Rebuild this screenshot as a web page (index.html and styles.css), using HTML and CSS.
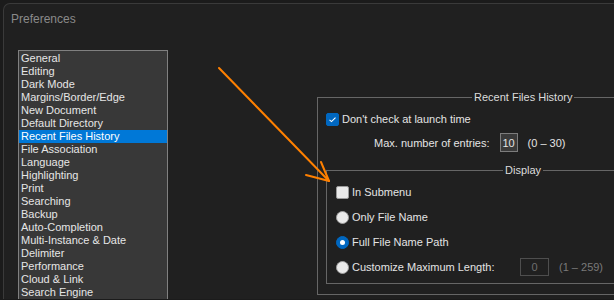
FILE: index.html
```html
<!DOCTYPE html>
<html lang="en">
<head>
  <meta charset="UTF-8" />
  <title>Preferences</title>
  <link rel="stylesheet" href="styles.css">
</head>
<body>
  <div class="window">
    <div class="title">Preferences</div>
    <div class="content">
      <!-- category list -->
      <div class="list">
        <div class="item">General</div>
        <div class="item">Editing</div>
        <div class="item">Dark Mode</div>
        <div class="item">Margins/Border/Edge</div>
        <div class="item">New Document</div>
        <div class="item">Default Directory</div>
        <div class="item selected">Recent Files History</div>
        <div class="item">File Association</div>
        <div class="item">Language</div>
        <div class="item">Highlighting</div>
        <div class="item">Print</div>
        <div class="item">Searching</div>
        <div class="item">Backup</div>
        <div class="item">Auto-Completion</div>
        <div class="item">Multi-Instance &amp; Date</div>
        <div class="item">Delimiter</div>
        <div class="item">Performance</div>
        <div class="item">Cloud &amp; Link</div>
        <div class="item">Search Engine</div>
      </div>

      <!-- settings panel -->
      <fieldset class="group outer">
        <legend class="legend-recent">Recent Files History</legend>
        <div class="row first">
          <span class="check checked"><svg width="13" height="13" viewBox="0 0 13 13"><path d="M3.5 6.8 L5.5 8.6 L9.5 4.6" fill="none" stroke="#fff" stroke-width="1.1"/></svg></span>
          <span>Don't check at launch time</span>
        </div>
        <div class="row entries">
          <span>Max. number of entries:</span>
          <span class="num">10</span>
          <span class="range">(0 – 30)</span>
        </div>

        <fieldset class="group inner">
          <legend class="legend-display">Display</legend>
          <div class="opt first">
            <span class="check"></span>
            <span>In Submenu</span>
          </div>
          <div class="opt">
            <span class="radio"></span>
            <span>Only File Name</span>
          </div>
          <div class="opt">
            <span class="radio on"></span>
            <span>Full File Name Path</span>
          </div>
          <div class="opt">
            <span class="radio"></span>
            <span class="wide">Customize Maximum Length:</span>
            <span class="num disabled">0</span>
            <span class="range dim">(1 – 259)</span>
          </div>
        </fieldset>
      </fieldset>
    </div>
  </div>

  <!-- annotation arrow -->
  <svg class="arrow" width="614" height="300" viewBox="0 0 614 300">
    <g fill="none" stroke="#ff8000" stroke-width="2" stroke-linecap="round">
      <path d="M219 68 L329 181"/>
      <path d="M329 181 L306 175"/>
      <path d="M329 181 L321 162"/>
    </g>
  </svg>
</body>
</html>
```

FILE: styles.css
```css
html, body { margin: 0; height: 100%; }
body { background: #1b1b1b; font-family: "Liberation Sans", Arial, sans-serif; font-size: 11px; color: #e4e4e4; overflow: hidden; position: relative; }
.window { margin: 3px 0 0 3px; height: 296px; box-sizing: border-box; overflow: hidden; background: #202020; border: 1px solid #3a3a3a; border-right: none; border-bottom: none; border-radius: 7px 0 0 0; }
.title { height: 46px; box-sizing: border-box; padding: 7px 0 0 7px; line-height: 16px; font-size: 12px; color: #8a8a8a; }
.content { display: flex; align-items: flex-start; }

.list { flex: none; margin-left: 14px; width: 148px; height: 260px; background: #383838; border: 1px solid #808080; padding-top: 1px; }
.item { line-height: 13px; height: 13px; padding-left: 2px; color: #e6e6e6; white-space: nowrap; }
.item.selected { background: #0078d7; color: #fff; }

.group { margin: 0; border: 1px solid #666; min-width: 0; }
.group legend { padding: 0 2px; line-height: 14px; font-size: 11px; color: #dcdcdc; }
.outer { flex: none; margin: 40px 0 0 149px; width: 330px; padding: 0 0 10px 8px; }
.legend-recent { margin-left: 146px; }
.inner { margin-top: 11px; width: 330px; padding: 0 0 8px 9px; }
.legend-display { margin-left: 167px; }

.row { display: flex; align-items: center; height: 16px; }
.row.first { margin-top: 7px; }
.row.entries { margin: 6px 0 0 48px; height: 19px; }

.opt { display: flex; align-items: center; height: 16px; margin-top: 9px; }
.opt.first { margin-top: 7px; }

.check { width: 13px; height: 13px; box-sizing: border-box; border-radius: 2px; background: #e9e9e9; border: 1px solid #9a9a9a; margin-right: 3px; flex: none; }
.check.checked { background: #0067c0; border-color: #0067c0; }
.check svg { display: block; margin: -1px; }
.radio { width: 13px; height: 13px; box-sizing: border-box; border-radius: 50%; background: #e9e9e9; border: 1px solid #a0a0a0; margin-right: 3px; flex: none; position: relative; }
.radio.on { background: #0067c0; border-color: #0067c0; }
.radio.on::after { content: ""; position: absolute; left: 3px; top: 3px; width: 5px; height: 5px; border-radius: 50%; background: #fff; }

.num { width: 18px; height: 19px; box-sizing: border-box; border: 1px solid #7c7c7c; background: #3a3a3a; margin-left: 10px; display: flex; align-items: center; justify-content: center; }
.num.disabled { width: 29px; height: 18px; background: none; border-color: #4e4e4e; color: #6e6e6e; margin-left: 0; }
.range { margin-left: 10px; }
.range.dim { color: #7a7a7a; }
.wide { width: 168px; }

.arrow { position: absolute; left: 0; top: 0; pointer-events: none; }
```
